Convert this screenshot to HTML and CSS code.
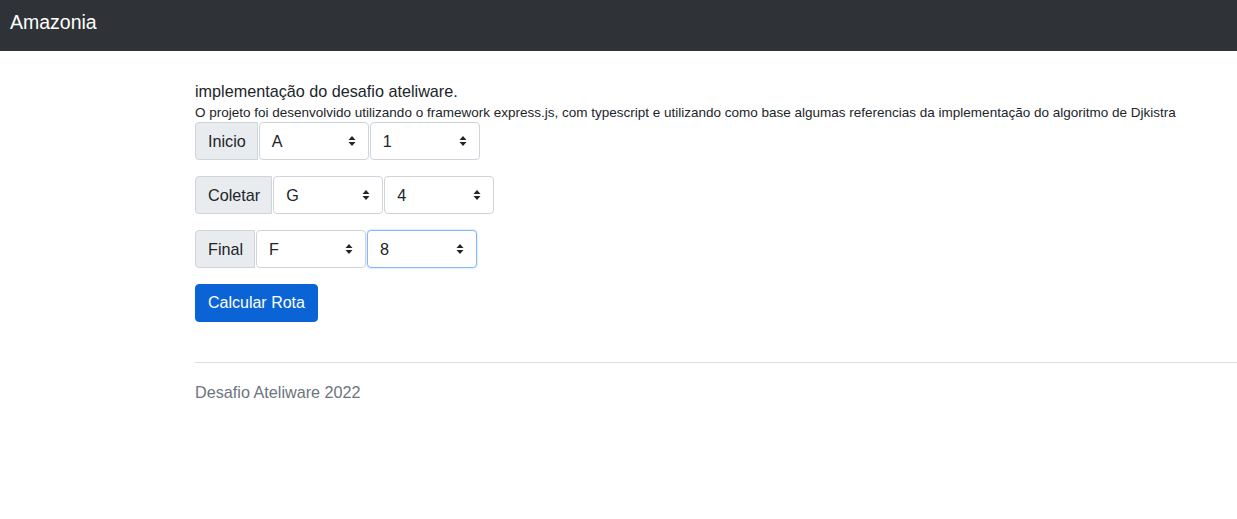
FILE: index.html
```html
<!DOCTYPE html>
<html lang="pt-BR">
<head>
<meta charset="utf-8">
<title>Amazonia</title>
<link rel="stylesheet" href="styles.css">
</head>
<body>
<nav class="navbar">
  <span class="brand">Amazonia</span>
</nav>
<main class="content">
  <p class="lead">implementação do desafio ateliware.</p>
  <p class="desc">O projeto foi desenvolvido utilizando o framework express.js, com typescript e utilizando como base algumas referencias da implementação do algoritmo de Djkistra</p>
  <form class="route-form">
    <div class="input-group">
      <span class="group-label">Inicio</span>
      <div class="select"><span>A</span><svg class="caret" viewBox="0 0 8 12" width="8" height="12"><path d="M4 1 L7.5 5 H0.5 Z M4 11 L0.5 7 H7.5 Z" fill="#212529"/></svg></div>
      <div class="select"><span>1</span><svg class="caret" viewBox="0 0 8 12" width="8" height="12"><path d="M4 1 L7.5 5 H0.5 Z M4 11 L0.5 7 H7.5 Z" fill="#212529"/></svg></div>
    </div>
    <div class="input-group">
      <span class="group-label">Coletar</span>
      <div class="select"><span>G</span><svg class="caret" viewBox="0 0 8 12" width="8" height="12"><path d="M4 1 L7.5 5 H0.5 Z M4 11 L0.5 7 H7.5 Z" fill="#212529"/></svg></div>
      <div class="select"><span>4</span><svg class="caret" viewBox="0 0 8 12" width="8" height="12"><path d="M4 1 L7.5 5 H0.5 Z M4 11 L0.5 7 H7.5 Z" fill="#212529"/></svg></div>
    </div>
    <div class="input-group">
      <span class="group-label">Final</span>
      <div class="select"><span>F</span><svg class="caret" viewBox="0 0 8 12" width="8" height="12"><path d="M4 1 L7.5 5 H0.5 Z M4 11 L0.5 7 H7.5 Z" fill="#212529"/></svg></div>
      <div class="select focused"><span>8</span><svg class="caret" viewBox="0 0 8 12" width="8" height="12"><path d="M4 1 L7.5 5 H0.5 Z M4 11 L0.5 7 H7.5 Z" fill="#212529"/></svg></div>
    </div>
    <button type="button" class="btn-primary">Calcular Rota</button>
  </form>
  <hr class="divider">
  <footer class="footer">Desafio Ateliware 2022</footer>
</main>
</body>
</html>
```
FILE: styles.css
```css
* { box-sizing: border-box; }
body {
  margin: 0;
  font-family: "Liberation Sans", Arial, sans-serif;
  color: #212529;
  background: #fff;
}
.navbar {
  height: 51px;
  background: #2f3337;
  display: flex;
  align-items: center;
  padding: 0 10px;
}
.brand {
  color: #fff;
  font-size: 19.5px;
  line-height: 1;
  margin-top: -6px;
}
.content {
  padding: 28px 0 0 195px;
}
.lead {
  margin: 0;
  font-size: 16.2px;
  line-height: 24px;
}
.desc {
  margin: 0;
  font-size: 13.5px;
  line-height: 19px;
}
.route-form {
  display: flex;
  flex-direction: column;
  align-items: flex-start;
}
.input-group {
  display: flex;
  gap: 1px;
  height: 38px;
  margin-bottom: 16px;
}
.group-label {
  display: flex;
  align-items: center;
  padding: 0 11px 0 12px;
  background: #e9ecef;
  border: 1px solid #ced4da;
  border-radius: 4px 0 0 4px;
  font-size: 16.2px;
  color: #212529;
}
.select {
  width: 110px;
  display: flex;
  align-items: center;
  justify-content: space-between;
  padding: 0 12px 0 12px;
  border: 1px solid #ced4da;
  border-radius: 4px;
  font-size: 16.2px;
  background: #fff;
}
.select.focused {
  border-color: #86b7fe;
  box-shadow: 0 0 0 1px rgba(13, 110, 253, 0.12);
}
.caret { display: block; }
.btn-primary {
  height: 38px;
  padding: 0 12px;
  background: #0a64d6;
  border: 1px solid #0a64d6;
  border-radius: 4px;
  color: #fff;
  font-family: inherit;
  font-size: 16px;
  margin: 0;
}
.divider {
  margin: 40px 0 0;
  border: 0;
  border-top: 1px solid #dcdfe2;
}
.footer {
  margin-top: 20px;
  font-size: 16.2px;
  color: #6c757d;
}
```
